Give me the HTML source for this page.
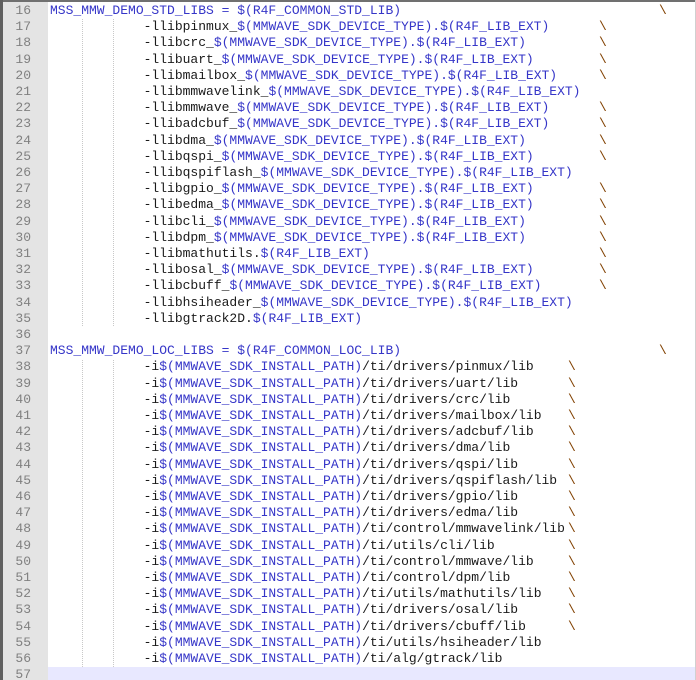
<!DOCTYPE html>
<html><head><meta charset="utf-8"><style>
html,body{margin:0;padding:0;width:696px;height:680px;overflow:hidden;background:#fff}
body{position:relative;font-family:"Liberation Mono",monospace;font-size:13px}
#topb{position:absolute;left:0;top:0;width:696px;height:2px;background:#707070}
#leftb{position:absolute;left:0;top:0;width:3px;height:680px;background:#606060}
#rightb{position:absolute;right:0;top:0;width:1px;height:680px;background:#d0d0d0}
#gutter{position:absolute;left:3px;top:2px;width:45px;height:678px;background:#e4e4e4}
#cur{position:absolute;left:48px;top:667px;width:647px;height:16px;background:#e8e8ff}
.g{position:absolute;width:0;border-left:1px dotted #c8c8c8}
.ln{position:absolute;left:3px;width:28px;text-align:right;color:#808080}
.l{position:absolute;left:50px;white-space:pre;color:#1a1a1a;height:16px;line-height:16px}
.b{color:#3535c8}
.bs{position:absolute;color:#804000}
</style></head><body>
<div id="gutter"></div><div id="cur"></div>
<div class="g" style="left:82px;top:19px;height:307px"></div>
<div class="g" style="left:113px;top:19px;height:307px"></div>
<div class="g" style="left:82px;top:360px;height:307px"></div>
<div class="g" style="left:113px;top:360px;height:307px"></div>
<div id="topb"></div><div id="leftb"></div><div id="rightb"></div>
<div id="c"></div>
<script>
var L=[
['<span class="b">MSS_MMW_DEMO_STD_LIBS = $(R4F_COMMON_STD_LIB)</span>',663],
['            -llibpinmux_<span class="b">$(MMWAVE_SDK_DEVICE_TYPE).$(R4F_LIB_EXT)</span>',603],
['            -llibcrc_<span class="b">$(MMWAVE_SDK_DEVICE_TYPE).$(R4F_LIB_EXT)</span>',603],
['            -llibuart_<span class="b">$(MMWAVE_SDK_DEVICE_TYPE).$(R4F_LIB_EXT)</span>',603],
['            -llibmailbox_<span class="b">$(MMWAVE_SDK_DEVICE_TYPE).$(R4F_LIB_EXT)</span>',603],
['            -llibmmwavelink_<span class="b">$(MMWAVE_SDK_DEVICE_TYPE).$(R4F_LIB_EXT)</span>',0],
['            -llibmmwave_<span class="b">$(MMWAVE_SDK_DEVICE_TYPE).$(R4F_LIB_EXT)</span>',603],
['            -llibadcbuf_<span class="b">$(MMWAVE_SDK_DEVICE_TYPE).$(R4F_LIB_EXT)</span>',603],
['            -llibdma_<span class="b">$(MMWAVE_SDK_DEVICE_TYPE).$(R4F_LIB_EXT)</span>',603],
['            -llibqspi_<span class="b">$(MMWAVE_SDK_DEVICE_TYPE).$(R4F_LIB_EXT)</span>',603],
['            -llibqspiflash_<span class="b">$(MMWAVE_SDK_DEVICE_TYPE).$(R4F_LIB_EXT)</span>',0],
['            -llibgpio_<span class="b">$(MMWAVE_SDK_DEVICE_TYPE).$(R4F_LIB_EXT)</span>',603],
['            -llibedma_<span class="b">$(MMWAVE_SDK_DEVICE_TYPE).$(R4F_LIB_EXT)</span>',603],
['            -llibcli_<span class="b">$(MMWAVE_SDK_DEVICE_TYPE).$(R4F_LIB_EXT)</span>',603],
['            -llibdpm_<span class="b">$(MMWAVE_SDK_DEVICE_TYPE).$(R4F_LIB_EXT)</span>',603],
['            -llibmathutils.<span class="b">$(R4F_LIB_EXT)</span>',603],
['            -llibosal_<span class="b">$(MMWAVE_SDK_DEVICE_TYPE).$(R4F_LIB_EXT)</span>',603],
['            -llibcbuff_<span class="b">$(MMWAVE_SDK_DEVICE_TYPE).$(R4F_LIB_EXT)</span>',603],
['            -llibhsiheader_<span class="b">$(MMWAVE_SDK_DEVICE_TYPE).$(R4F_LIB_EXT)</span>',0],
['            -llibgtrack2D.<span class="b">$(R4F_LIB_EXT)</span>',0],
['',0],
['<span class="b">MSS_MMW_DEMO_LOC_LIBS = $(R4F_COMMON_LOC_LIB)</span>',663]
];
var P=['drivers/pinmux','drivers/uart','drivers/crc','drivers/mailbox','drivers/adcbuf','drivers/dma','drivers/qspi','drivers/qspiflash','drivers/gpio','drivers/edma','control/mmwavelink','utils/cli','control/mmwave','control/dpm','utils/mathutils','drivers/osal','drivers/cbuff','utils/hsiheader','alg/gtrack'];
P.forEach(function(p,i){L.push(['            -i<span class="b">$(MMWAVE_SDK_INSTALL_PATH)</span>/ti/'+p+'/lib',i<17?572:0]);});
L.push(['',0]);
var h='';
L.forEach(function(r,i){var t=(3+i*16.2).toFixed(1);
h+='<div class="ln" style="top:'+t+'px;line-height:16px">'+(16+i)+'</div>';
h+='<div class="l" style="top:'+t+'px">'+r[0]+'</div>';
if(r[1])h+='<div class="bs" style="top:'+t+'px;left:'+(r[1]-4)+'px;line-height:16px">\\</div>';});
document.getElementById('c').innerHTML=h;
</script>
</body></html>
